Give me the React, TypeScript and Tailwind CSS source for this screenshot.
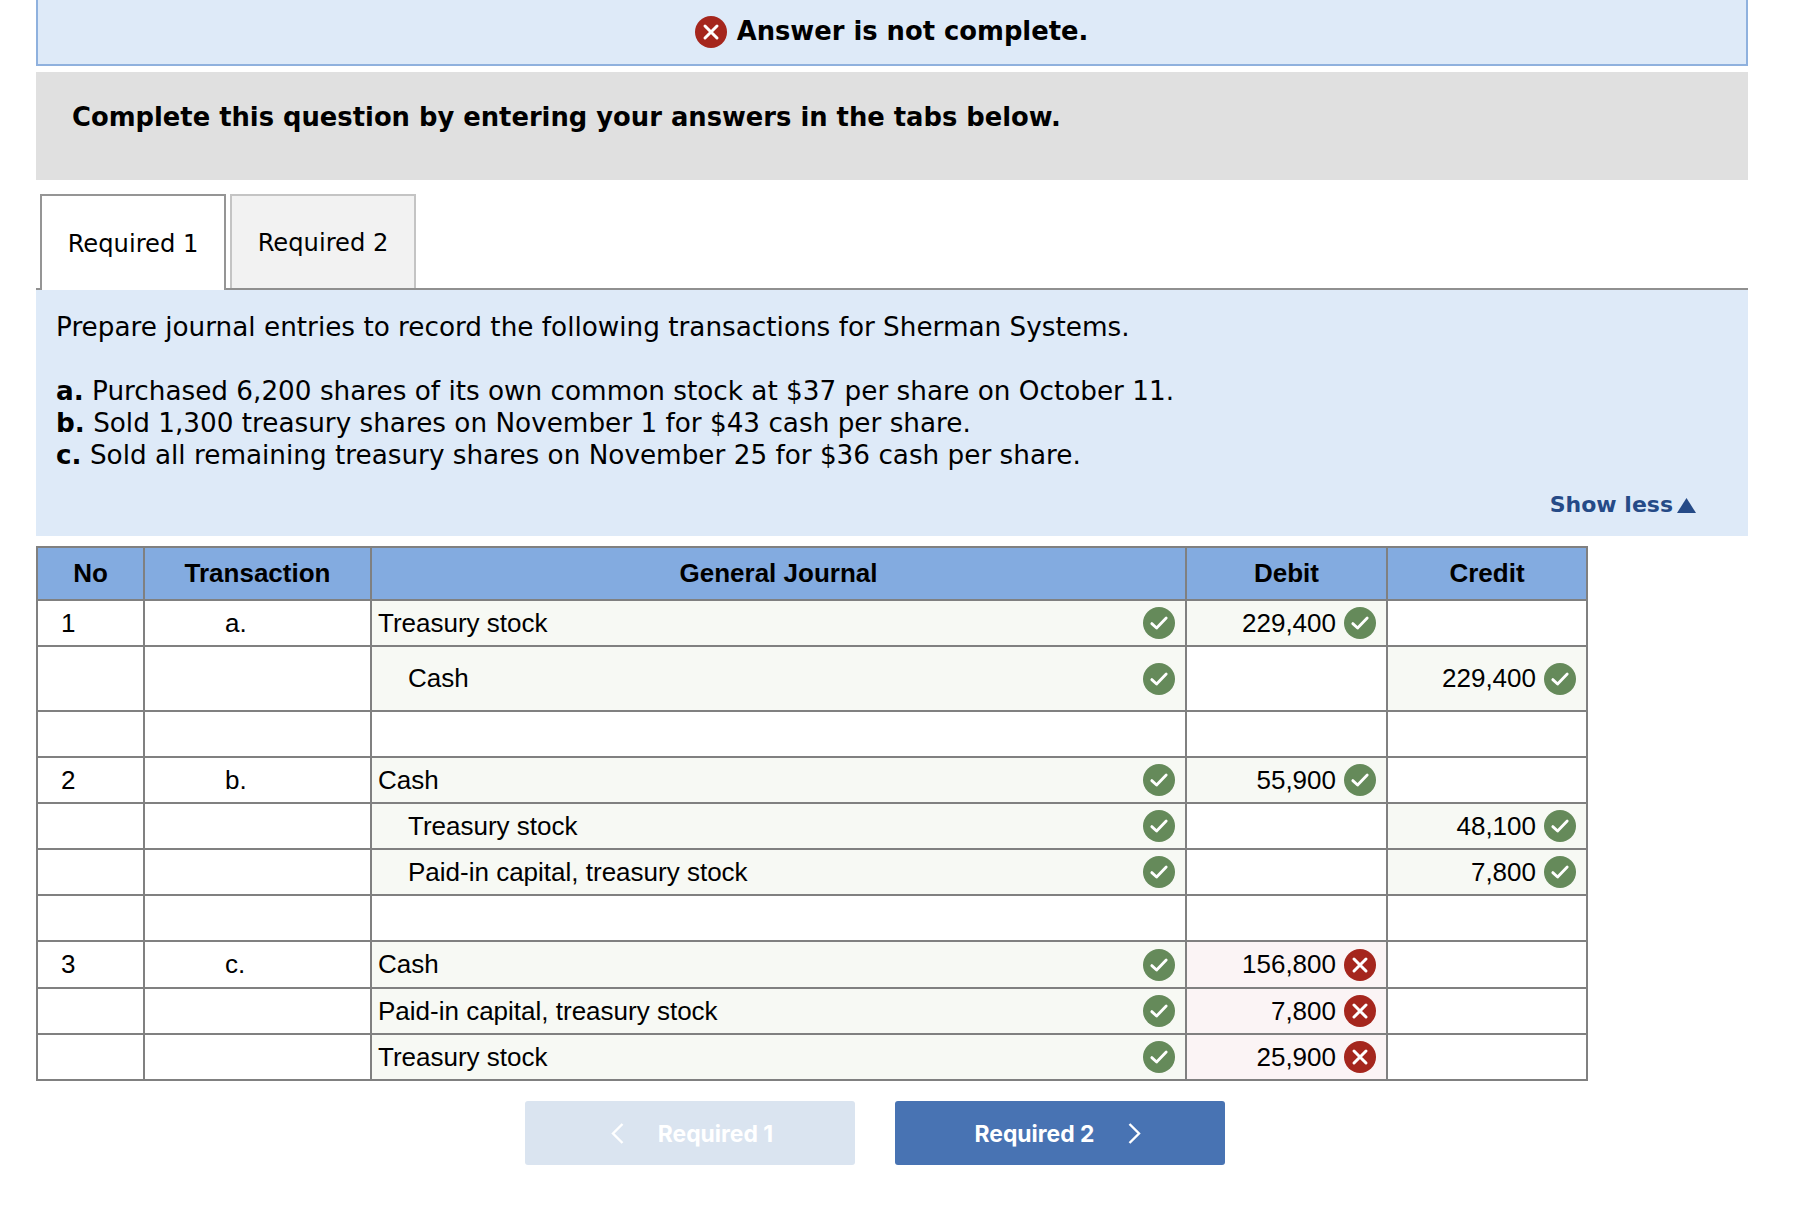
import React from 'react';

type Mark = 'ok' | 'bad';

type Row = {
  no?: string;
  tx?: string;
  account?: string;
  indent?: boolean;
  accountMark?: Mark;
  debit?: string;
  debitMark?: Mark;
  credit?: string;
  creditMark?: Mark;
  height: string;
};

const ROWS: Row[] = [
  { no: '1', tx: 'a.', account: 'Treasury stock', accountMark: 'ok', debit: '229,400', debitMark: 'ok', height: 'h-[46px]' },
  { account: 'Cash', indent: true, accountMark: 'ok', credit: '229,400', creditMark: 'ok', height: 'h-[65px]' },
  { height: 'h-[46px]' },
  { no: '2', tx: 'b.', account: 'Cash', accountMark: 'ok', debit: '55,900', debitMark: 'ok', height: 'h-[46px]' },
  { account: 'Treasury stock', indent: true, accountMark: 'ok', credit: '48,100', creditMark: 'ok', height: 'h-[46px]' },
  { account: 'Paid-in capital, treasury stock', indent: true, accountMark: 'ok', credit: '7,800', creditMark: 'ok', height: 'h-[46px]' },
  { height: 'h-[46px]' },
  { no: '3', tx: 'c.', account: 'Cash', accountMark: 'ok', debit: '156,800', debitMark: 'bad', height: 'h-[47px]' },
  { account: 'Paid-in capital, treasury stock', accountMark: 'ok', debit: '7,800', debitMark: 'bad', height: 'h-[46px]' },
  { account: 'Treasury stock', accountMark: 'ok', debit: '25,900', debitMark: 'bad', height: 'h-[46px]' },
];

function MarkIcon({ mark }: { mark: Mark }) {
  if (mark === 'ok') {
    return (
      <svg viewBox="0 0 32 32" className="w-8 h-8 shrink-0">
        <circle cx="16" cy="16" r="16" fill="#658a5a" />
        <path d="M8.8 16.6l4.8 4.4 9.6-10" fill="none" stroke="#fff" strokeWidth="2.8" strokeLinecap="round" strokeLinejoin="round" />
      </svg>
    );
  }
  return (
    <svg viewBox="0 0 32 32" className="w-8 h-8 shrink-0">
      <circle cx="16" cy="16" r="16" fill="#a5261d" />
      <path d="M10 10l12 12M22 10L10 22" fill="none" stroke="#fff" strokeWidth="3" strokeLinecap="round" />
    </svg>
  );
}

function AmountCell({ value, mark }: { value?: string; mark?: Mark }) {
  const bg = mark === 'ok' ? 'bg-[#f7f9f4]' : mark === 'bad' ? 'bg-[#fbf4f5]' : 'bg-white';
  return (
    <td className={`border-2 border-[#808080] p-0 ${bg}`}>
      {value && (
        <div className="flex items-center justify-end gap-[8px] pr-[10px]">
          <span>{value}</span>
          {mark && <MarkIcon mark={mark} />}
        </div>
      )}
    </td>
  );
}

export default function App() {
  return (
    <div className="w-[1802px] h-[1218px] bg-white overflow-hidden">
      <div className="ml-[36px] w-[1712px]">
        {/* Result banner */}
        <div className="h-[66px] bg-[#deeaf8] border-2 border-t-0 border-[#8fb1de] flex items-center justify-center gap-[10px] pr-[1px]">
          <MarkIcon mark="bad" />
          <span className="-mt-[2px] font-['DejaVu_Sans',sans-serif] font-bold text-[25.8px] text-black">Answer is not complete.</span>
        </div>

        <div className="mt-[6px] h-[108px] bg-[#e0e0e0] pl-[36px] pt-[28px]">
          <p className="font-['DejaVu_Sans',sans-serif] font-bold text-[25.8px] leading-[34px] text-black">
            Complete this question by entering your answers in the tabs below.
          </p>
        </div>

        {/* Tabs */}
        <div className="mt-[14px] h-[96px] flex items-stretch gap-[4px] pl-[4px] border-b-2 border-[#909090] font-['DejaVu_Sans',sans-serif] text-[24.2px] text-black">
          <div className="w-[186px] -mb-[2px] pt-[3px] bg-white border-2 border-b-0 border-[#959595] flex items-center justify-center">Required 1</div>
          <div className="w-[186px] pt-[3px] bg-[#f2f2f2] border-2 border-b-0 border-[#c4c4c4] flex items-center justify-center">Required 2</div>
        </div>

        {/* Instructions */}
        <div className="h-[246px] bg-[#deeaf8] px-[20px] pt-[21px] font-['DejaVu_Sans',sans-serif] text-[26.28px] leading-[32px] text-black">
          <p>Prepare journal entries to record the following transactions for Sherman Systems.</p>
          <p className="mt-[32px]"><b>a.</b> Purchased 6,200 shares of its own common stock at $37 per share on October 11.</p>
          <p><b>b.</b> Sold 1,300 treasury shares on November 1 for $43 cash per share.</p>
          <p><b>c.</b> Sold all remaining treasury shares on November 25 for $36 cash per share.</p>
          <div className="mt-[18px] mr-[32px] flex items-center justify-end gap-[4px] font-bold text-[22px] text-[#254a87]">
            <span>Show less</span>
            <svg viewBox="0 0 19 15" className="w-[19px] h-[15px]">
              <path d="M9.5 0L19 15H0z" fill="#254a87" />
            </svg>
          </div>
        </div>

        {/* Journal table */}
        <table className="mt-[10px] w-[1550px] table-fixed border-collapse font-['Liberation_Sans',sans-serif] text-[26px] text-black">
          <colgroup>
            <col className="w-[107px]" />
            <col className="w-[227px]" />
            <col className="w-[815px]" />
            <col className="w-[201px]" />
            <col className="w-[200px]" />
          </colgroup>
          <thead>
            <tr className="h-[53px] bg-[#83abe0] font-bold">
              {['No', 'Transaction', 'General Journal', 'Debit', 'Credit'].map((h) => (
                <th key={h} className="border-2 border-[#808080] p-0 text-center font-bold">{h}</th>
              ))}
            </tr>
          </thead>
          <tbody>
            {ROWS.map((row, i) => (
              <tr key={i} className={row.height}>
                <td className="border-2 border-[#808080] p-0 pl-[23px]">{row.no}</td>
                <td className="border-2 border-[#808080] p-0 pl-[80px]">{row.tx}</td>
                <td className={`border-2 border-[#808080] p-0 ${row.account ? 'bg-[#f7f9f4]' : 'bg-white'}`}>
                  {row.account && (
                    <div className={`flex items-center justify-between pr-[10px] ${row.indent ? 'pl-[36px]' : 'pl-[6px]'}`}>
                      <span>{row.account}</span>
                      {row.accountMark && <MarkIcon mark={row.accountMark} />}
                    </div>
                  )}
                </td>
                <AmountCell value={row.debit} mark={row.debitMark} />
                <AmountCell value={row.credit} mark={row.creditMark} />
              </tr>
            ))}
          </tbody>
        </table>

        {/* Pager */}
        <div className="mt-[20px] ml-[489px] flex gap-[40px] font-['Inter',sans-serif] font-bold text-[22.9px] text-white">
          <div className="w-[330px] h-[64px] pl-[4px] pt-[2px] rounded-[3px] bg-[#dae4f0] flex items-center justify-center gap-[34px]">
            <svg viewBox="0 0 13 21" className="w-[13px] h-[21px] -mt-[2px]">
              <path d="M11.5 1L2 10.5 11.5 20" fill="none" stroke="#fff" strokeWidth="2.4" />
            </svg>
            <span>Required 1</span>
          </div>
          <div className="w-[330px] h-[64px] pr-[4px] pt-[2px] rounded-[3px] bg-[#4873b3] flex items-center justify-center gap-[34px]">
            <span>Required 2</span>
            <svg viewBox="0 0 13 21" className="w-[13px] h-[21px] -mt-[2px]">
              <path d="M1.5 1L11 10.5 1.5 20" fill="none" stroke="#fff" strokeWidth="2.4" />
            </svg>
          </div>
        </div>
      </div>
    </div>
  );
}
